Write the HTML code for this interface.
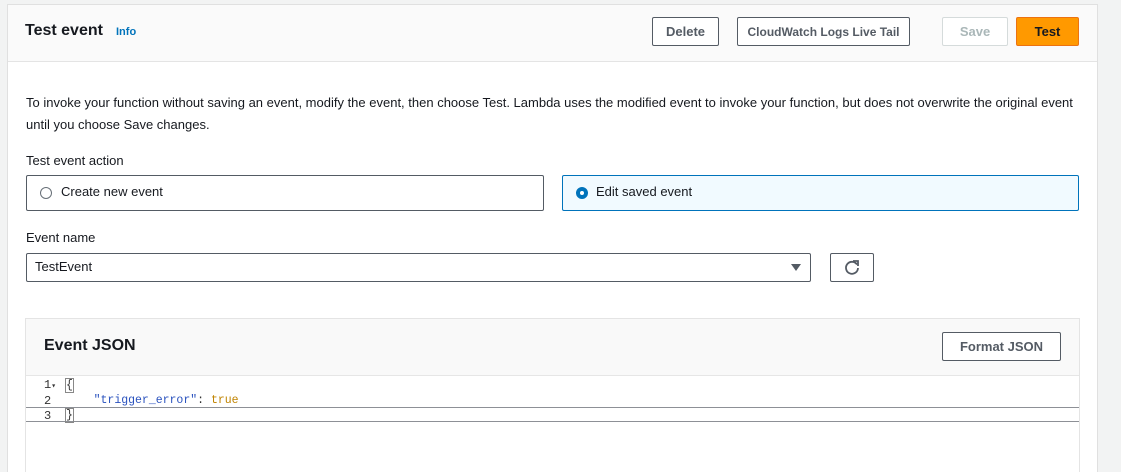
<!DOCTYPE html><html><head><style>
html,body{margin:0;width:1121px;height:472px;overflow:hidden}
body{background:#f2f3f3;font-family:"Liberation Sans",Arial,sans-serif;position:relative;color:#16191f}
.a{position:absolute}
.main{left:7px;top:4px;width:1091px;height:468px;background:#fff;border:1px solid #e0e0e0;border-bottom:none;box-sizing:border-box}
.hdr{left:8px;top:5px;width:1089px;height:56px;background:#fafafa;border-bottom:1px solid #e4e4e4}
.btn{position:absolute;box-sizing:border-box;border:1px solid #545b64;border-radius:2px;background:#fff;font-weight:bold;font-size:13px;color:#545b64;display:flex;align-items:center;justify-content:center;white-space:nowrap}
.t13{font-size:13px}
</style></head><body>
<div class="a main"></div>
<div class="a hdr"></div>
<div class="a" style="left:25px;top:22px;font-size:16px;font-weight:bold">Test event</div>
<div class="a" style="left:116px;top:26px;font-size:11px;font-weight:bold;color:#0073bb">Info</div>
<div class="btn" style="left:652px;top:17px;width:67px;height:29px">Delete</div>
<div class="btn" style="left:737px;top:17px;width:173px;height:29px;font-size:12px">CloudWatch Logs Live Tail</div>
<div class="btn" style="left:942px;top:17px;width:66px;height:29px;border-color:#d5dbdb;color:#aab7b8">Save</div>
<div class="btn" style="left:1016px;top:17px;width:63px;height:29px;border-color:#ec7211;background:#ff9900;color:#16191f">Test</div>
<div class="a t13" style="left:26px;top:92px;width:1060px;line-height:22px">To invoke your function without saving an event, modify the event, then choose Test. Lambda uses the modified event to invoke your function, but does not overwrite the original event until you choose Save changes.</div>
<div class="a t13" style="left:26px;top:153px">Test event action</div>
<div class="a" style="left:26px;top:175px;width:518px;height:36px;box-sizing:border-box;border:1px solid #545b64;border-radius:2px"></div>
<div class="a" style="left:40px;top:187px;width:12px;height:12px;box-sizing:border-box;border:1px solid #687078;border-radius:50%"></div>
<div class="a t13" style="left:61px;top:184px">Create new event</div>
<div class="a" style="left:562px;top:175px;width:517px;height:36px;box-sizing:border-box;border:1px solid #0073bb;border-radius:2px;background:#f1faff"></div>
<div class="a" style="left:576px;top:187px;width:12px;height:12px;box-sizing:border-box;border:4px solid #0073bb;border-radius:50%;background:#fff"></div>
<div class="a t13" style="left:596px;top:184px">Edit saved event</div>
<div class="a t13" style="left:26px;top:230px">Event name</div>
<div class="a" style="left:26px;top:253px;width:785px;height:29px;box-sizing:border-box;border:1px solid #545b64;border-radius:2px"></div>
<div class="a t13" style="left:35px;top:259px">TestEvent</div>
<div class="a" style="left:791px;top:264px;width:0;height:0;border-left:5px solid transparent;border-right:5px solid transparent;border-top:7px solid #545b64"></div>
<div class="a" style="left:830px;top:253px;width:44px;height:29px;box-sizing:border-box;border:1px solid #545b64;border-radius:2px"></div>
<svg class="a" style="left:843px;top:259px" width="18" height="18" viewBox="0 0 18 18"><path d="M14 5.5A6 6 0 1 0 15 9" fill="none" stroke="#545b64" stroke-width="1.8"/><path d="M10 2l5 0 0 5" fill="none" stroke="#545b64" stroke-width="1.8"/></svg>
<div class="a" style="left:25px;top:318px;width:1055px;height:154px;box-sizing:border-box;border:1px solid #e4e4e4;border-bottom:none;background:#fff"></div>
<div class="a" style="left:26px;top:319px;width:1053px;height:56px;background:#f9f9f9;border-bottom:1px solid #e6e6e6"></div>
<div class="a" style="left:44px;top:337px;font-size:16px;font-weight:bold">Event JSON</div>
<div class="btn" style="left:942px;top:332px;width:119px;height:29px">Format JSON</div>
<div class="a" style="left:26px;top:407px;width:1053px;height:15px;box-sizing:border-box;border-top:1px solid #8d9096;border-bottom:1px solid #8d9096"></div>
<div class="a" style="left:44px;top:378px;font-family:'Liberation Mono',monospace;font-size:12px;line-height:15px;color:#333;white-space:pre">1<span style="font-size:8px">▾</span>
2
3</div>
<div class="a" style="left:66px;top:378px;font-family:'Liberation Mono',monospace;font-size:11.5px;line-height:15px;color:#333;white-space:pre"><span style="outline:1px solid #888">{</span>
    <span style="color:#2a52be">"trigger_error"</span>: <span style="color:#c18401">true</span>
<span style="outline:1px solid #888">}</span></div>
</body></html>
